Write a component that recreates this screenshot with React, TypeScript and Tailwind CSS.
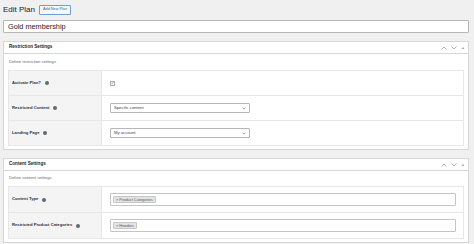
import React from "react";

const Help = () => (
  <span className="inline-block w-[4px] h-[4px] rounded-full bg-[#646970] ml-[4px] align-middle" />
);

const Arrows = () => (
  <div className="flex items-center gap-[4px] pr-[3px]">
    <svg width="6" height="4" viewBox="0 0 6 4"><path d="M0.5 3.5 L3 1 L5.5 3.5" fill="none" stroke="#a7aaad" strokeWidth="0.9" /></svg>
    <svg width="6" height="4" viewBox="0 0 6 4"><path d="M0.5 0.5 L3 3 L5.5 0.5" fill="none" stroke="#a7aaad" strokeWidth="0.9" /></svg>
    <svg width="4" height="4" viewBox="0 0 4 4"><path d="M0.5 3 L2 1 L3.5 3 Z" fill="#a7aaad" /></svg>
  </div>
);

const Select = ({ value }: { value: string }) => (
  <div className="w-[140px] h-[10px] border border-[#b4b6b9] rounded-[1px] bg-white flex items-center justify-between px-[3px]">
    <span className="text-[4.2px] text-[#3c434a] leading-none">{value}</span>
    <svg width="4" height="3" viewBox="0 0 4 3"><path d="M0.5 0.8 L2 2.2 L3.5 0.8" fill="none" stroke="#646970" strokeWidth="0.6" /></svg>
  </div>
);

const Token = ({ label }: { label: string }) => (
  <span className="inline-flex items-center h-[7px] px-[2px] bg-[#e4e4e4] border border-[#c6c6c6] rounded-[1px] text-[3.9px] text-[#555] leading-none">
    ×&nbsp;{label}
  </span>
);

const Row = ({ label, h, children, last }: { label: string; h: string; children: React.ReactNode; last?: boolean }) => (
  <div className={`flex ${h} ${last ? "" : "border-b border-[#e6e7e8]"}`}>
    <div className="w-[93px] shrink-0 bg-[#f4f4f5] border-r border-[#e6e7e8] flex items-center pl-[3px]">
      <span className="text-[4.2px] font-bold text-[#2c3338] leading-none">{label}</span>
      <Help />
    </div>
    <div className="flex-1 flex items-center pl-[8px]">{children}</div>
  </div>
);

export default function App() {
  return (
    <div
      className="w-[474px] h-[244px] bg-[#f0f0f1] overflow-hidden pl-[3px] pr-[5px]"
      style={{ fontFamily: '"Liberation Sans", Arial, sans-serif' }}
    >
      <div className="flex items-center h-[10px] mt-[5px]">
        <span className="text-[8px] text-[#1d2327] leading-none">Edit Plan</span>
        <span className="ml-[4px] h-[10px] px-[3px] border border-[#6d9fcf] rounded-[1px] bg-[#f6f7f7] text-[3.8px] text-[#2271b1] flex items-center leading-none">
          Add New Plan
        </span>
      </div>

      <div className="mt-[5px] h-[13px] bg-white border border-[#b4b6b9] rounded-[1px] flex items-center pl-[4px]">
        <span className="text-[7.3px] text-[#1d2327] leading-none">Gold membership</span>
      </div>

      {/* Restriction settings */}
      <div className="mt-[8px] bg-white border border-[#d6d7d9]">
        <div className="h-[12px] border-b border-[#d6d7d9] flex items-center justify-between pl-[5px]">
          <span className="text-[4.6px] font-bold text-[#1d2327] leading-none">Restriction Settings</span>
          <Arrows />
        </div>
        <div className="h-[16px] flex items-center pl-[5px]">
          <span className="text-[4.2px] text-[#646970] leading-none">Define restriction settings</span>
        </div>
        <div className="mx-[4px] mb-[3px] border border-[#e6e7e8]">
          <Row label="Activate Plan?" h="h-[25px]">
            <span className="w-[5px] h-[5px] border border-[#a7aaad] rounded-[0.5px] bg-white flex items-center justify-center">
              <svg width="4" height="4" viewBox="0 0 4 4"><path d="M0.6 2 L1.6 3 L3.4 0.7" fill="none" stroke="#3582c4" strokeWidth="0.7" /></svg>
            </span>
          </Row>
          <Row label="Restricted Content" h="h-[25px]">
            <Select value="Specific content" />
          </Row>
          <Row label="Landing Page" h="h-[24px]" last>
            <Select value="My account" />
          </Row>
        </div>
      </div>

      {/* Content settings */}
      <div className="mt-[8px] bg-white border border-[#d6d7d9]">
        <div className="h-[12px] border-b border-[#d6d7d9] flex items-center justify-between pl-[5px]">
          <span className="text-[4.6px] font-bold text-[#1d2327] leading-none">Content Settings</span>
          <Arrows />
        </div>
        <div className="h-[15px] flex items-center pl-[5px]">
          <span className="text-[4.2px] text-[#646970] leading-none">Define content settings</span>
        </div>
        <div className="mx-[4px] mb-[3px] border border-[#e6e7e8]">
          <Row label="Content Type" h="h-[26px]">
            <div className="w-[346px] h-[13px] border border-[#c3c4c7] rounded-[1px] bg-white flex items-center pl-[2px]">
              <Token label="Product Categories" />
            </div>
          </Row>
          <Row label="Restricted Product Categories" h="h-[25px]" last>
            <div className="w-[346px] h-[13px] border border-[#c3c4c7] rounded-[1px] bg-white flex items-center pl-[2px]">
              <Token label="Hoodies" />
            </div>
          </Row>
        </div>
      </div>
    </div>
  );
}
